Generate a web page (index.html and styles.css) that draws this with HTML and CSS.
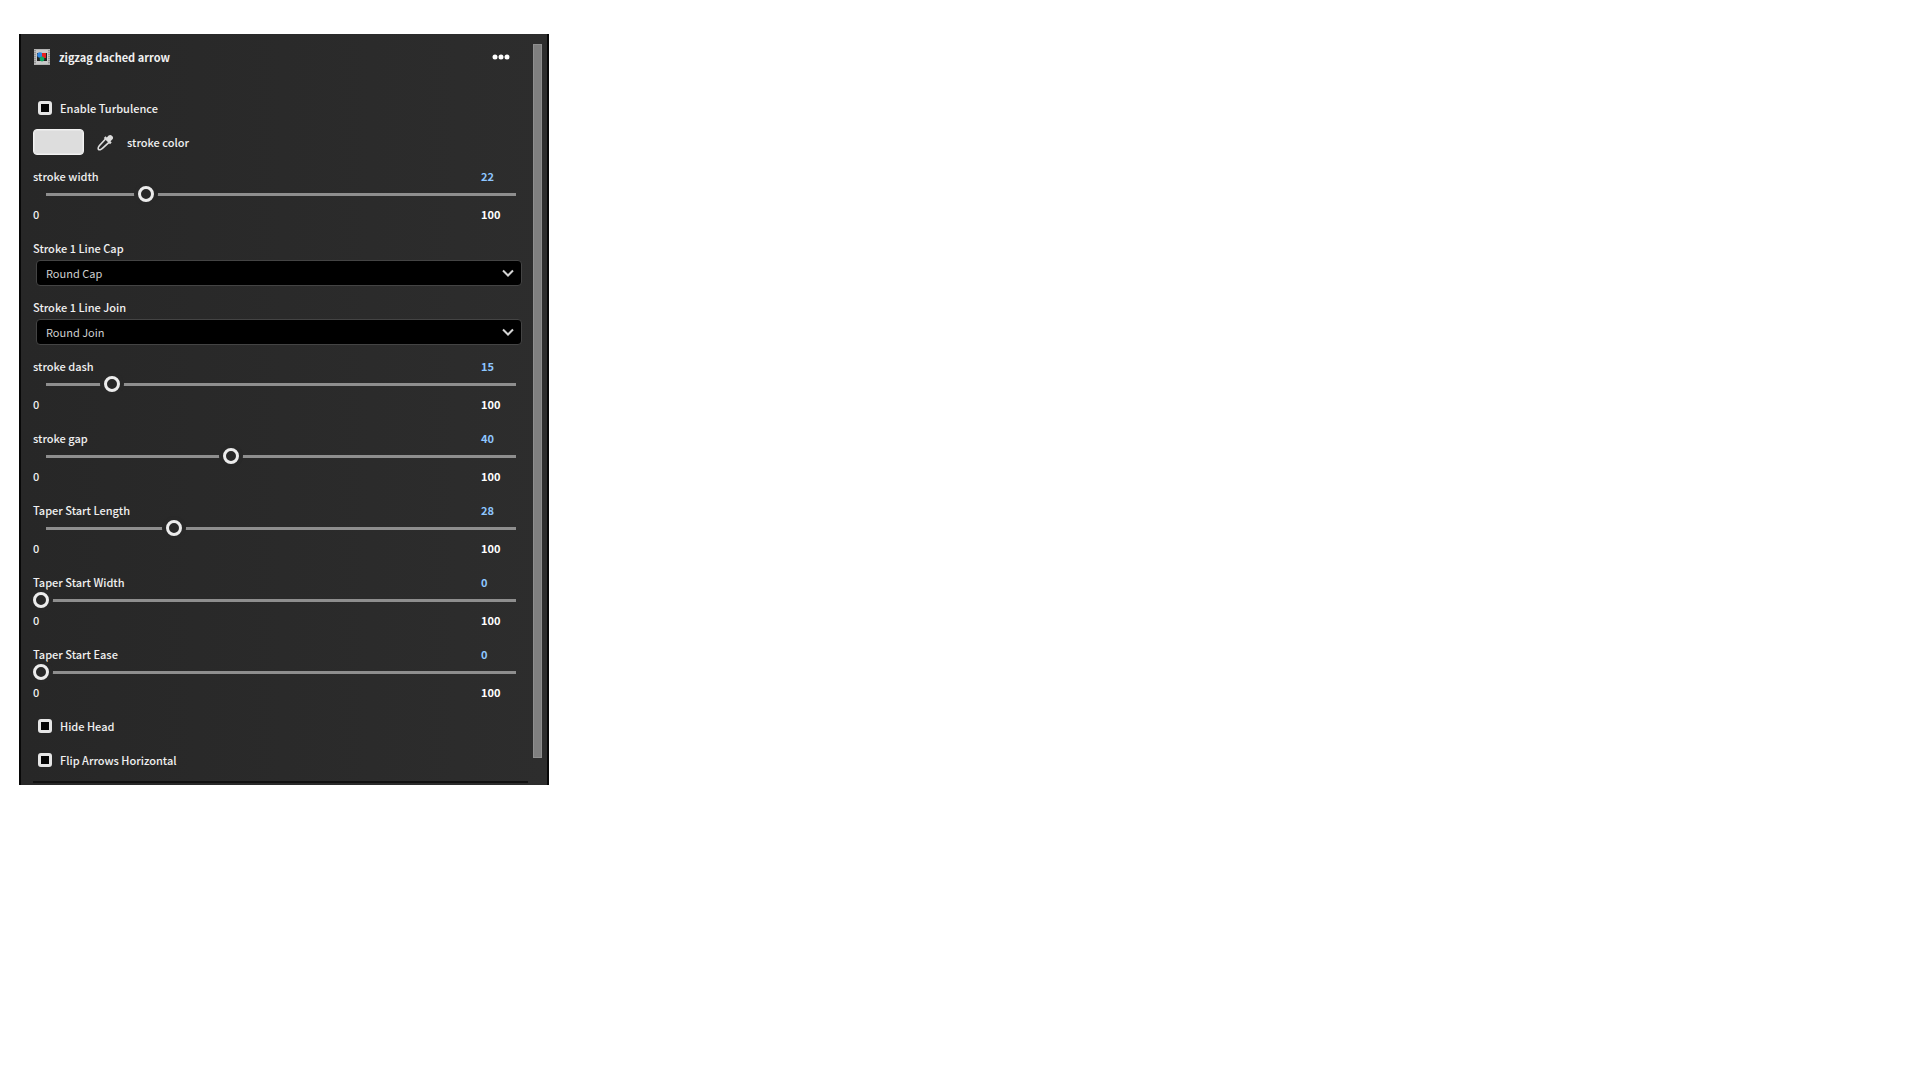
FILE: index.html
```html
<!DOCTYPE html>
<html lang="en">
<head>
    <meta charset="UTF-8">
    <title>zigzag dached arrow</title>
    <link rel="stylesheet" href="styles.css">
</head>
<body>
<form class="panel">
    <div class="panelContent">
        <div class="panelHeader">
            <svg class="clipIcon" viewBox="0 0 16 16" width="16" height="16">
                <rect width="16" height="16" fill="#b4b4b4"/>
                <path d="M1 1v14M15 1v14" stroke="#777" stroke-dasharray="1 1"/>
                <rect x="2" y="1" width="12" height="14" fill="#c8c8c8"/>
                <rect x="3" y="4" width="10" height="8" fill="#222"/>
                <circle cx="6" cy="6" r="2.800" fill="#2f86e0"/>
                <rect x="8" y="4" width="4" height="5" fill="#e82020"/>
                <circle cx="8" cy="10" r="2.400" fill="#10a860"/>
            </svg>
            <h1 class="panelTitle">zigzag dached arrow</h1>
            <button class="menuButton" type="button" aria-label="Menu">
                <svg viewBox="0 0 18 6" width="18" height="6">
                    <circle cx="3" cy="3" r="2.500"/>
                    <circle cx="9" cy="3" r="2.500"/>
                    <circle cx="15" cy="3" r="2.500"/>
                </svg>
            </button>
        </div>

        <div class="checkRow">
            <input class="check" id="turbulence" type="checkbox">
            <label for="turbulence">Enable Turbulence</label>
        </div>

        <div class="colorRow">
            <input class="swatch" id="strokeColor" type="color" value="#dddddd">
            <button class="pickButton" type="button" aria-label="Pick color">
                <svg viewBox="0 0 17 17" width="17" height="17">
                    <path d="M8.500 5L2.500 11.500C1.400 12.700 0.800 14.700 1.500 15.400S4.200 15.500 5.400 14.400L12 8.300" fill="none" stroke="#dcdcdc" stroke-width="1.700"/>
                    <path d="M6.800 4L8.500 2.300l1.300 1.100L11.600 1.600C13.600 -0.600 17.600 3 15.500 5.200L13.500 7.200l1.200 1.400-1.700 1.700z" fill="#dcdcdc"/>
                </svg>
            </button>
            <label for="strokeColor">stroke color</label>
        </div>

        <div class="sliderGroup">
            <div class="line"><label for="strokeWidth">stroke width</label><output class="value" for="strokeWidth">22</output></div>
            <input class="slider" id="strokeWidth" type="range" min="0" max="100" value="22">
            <div class="line"><span>0</span><span class="max">100</span></div>
        </div>

        <div class="selectGroup">
            <label class="line" for="lineCap">Stroke 1 Line Cap</label>
            <div class="selectBox">
                <select class="select" id="lineCap">
                    <option>Round Cap</option>
                    <option>Butt Cap</option>
                </select>
                <svg class="chevron" viewBox="0 0 12 8" width="12" height="8"><path d="M1 1.500L6 6.500l5-5"/></svg>
            </div>
        </div>

        <div class="selectGroup">
            <label class="line" for="lineJoin">Stroke 1 Line Join</label>
            <div class="selectBox">
                <select class="select" id="lineJoin">
                    <option>Round Join</option>
                    <option>Miter Join</option>
                </select>
                <svg class="chevron" viewBox="0 0 12 8" width="12" height="8"><path d="M1 1.500L6 6.500l5-5"/></svg>
            </div>
        </div>

        <div class="sliderGroup">
            <div class="line"><label for="strokeDash">stroke dash</label><output class="value" for="strokeDash">15</output></div>
            <input class="slider" id="strokeDash" type="range" min="0" max="100" value="15">
            <div class="line"><span>0</span><span class="max">100</span></div>
        </div>

        <div class="sliderGroup">
            <div class="line"><label for="strokeGap">stroke gap</label><output class="value" for="strokeGap">40</output></div>
            <input class="slider" id="strokeGap" type="range" min="0" max="100" value="40">
            <div class="line"><span>0</span><span class="max">100</span></div>
        </div>

        <div class="sliderGroup">
            <div class="line"><label for="taperLength">Taper Start Length</label><output class="value" for="taperLength">28</output></div>
            <input class="slider" id="taperLength" type="range" min="0" max="100" value="28">
            <div class="line"><span>0</span><span class="max">100</span></div>
        </div>

        <div class="sliderGroup">
            <div class="line"><label for="taperWidth">Taper Start Width</label><output class="value" for="taperWidth">0</output></div>
            <input class="slider" id="taperWidth" type="range" min="0" max="100" value="0">
            <div class="line"><span>0</span><span class="max">100</span></div>
        </div>

        <div class="sliderGroup">
            <div class="line"><label for="taperEase">Taper Start Ease</label><output class="value" for="taperEase">0</output></div>
            <input class="slider" id="taperEase" type="range" min="0" max="100" value="0">
            <div class="line"><span>0</span><span class="max">100</span></div>
        </div>

        <div class="checkRow">
            <input class="check" id="hideHead" type="checkbox">
            <label for="hideHead">Hide Head</label>
        </div>
        <div class="checkRow">
            <input class="check" id="flipArrows" type="checkbox">
            <label for="flipArrows">Flip Arrows Horizontal</label>
        </div>
        <hr class="divider">
    </div>
    <div class="scrollThumb"></div>
</form>
<script>
    var sliders = document.querySelectorAll('.slider');
    for (var i = 0; i < sliders.length; i++) {
        sliders[i].oninput = function () {
            document.querySelector('output[for="' + this.id + '"]').value = this.value;
        };
    }
</script>
</body>
</html>
```
FILE: styles.css
```css
* {
    box-sizing: border-box;
}
body {
    margin: 0;
    background-color: #fff;
    font-family: "Noto Sans CJK SC", "Noto Sans", sans-serif;
    font-size: 11px;
    font-weight: 500;
    line-height: 20px;
    color: #f0f0f0;
}
button {
    display: flex;
    margin: 0;
    padding: 0;
    border: 0;
    background: none;
}
.panel {
    display: flex;
    gap: 5px;
    max-width: 530px;
    margin: 34px 19px;
    padding: 0 5px 2px 12px;
    border: solid #070707;
    border-width: 0 2px;
    background: linear-gradient(90deg, #272727, #2d2d2d);
}
.panelContent {
    flex: 1;
}
.panelHeader {
    display: flex;
    align-items: center;
    height: 57px;
    padding: 0 18px 11px 1px;
}
.panelTitle {
    flex: 1;
    margin: 0 0 0 9px;
    font-size: 11px;
    font-weight: 700;
}
.menuButton {
    fill: #fff;
}
.checkRow,
.colorRow {
    display: flex;
    align-items: center;
    height: 34px;
}
.checkRow {
    gap: 8px;
    padding-left: 5px;
}
.check {
    appearance: none;
    width: 14px;
    height: 14px;
    margin: 0;
    border: 3px solid #e6e6e6;
    border-radius: 3px;
    background-color: #050505;
}
.check:checked {
    background-color: #4b9cf5;
}
.swatch {
    appearance: none;
    width: 51px;
    height: 26px;
    margin: 0;
    padding: 0;
    border: 1px solid #f2f2f2;
    border-radius: 4px;
    background-color: #dddddd;
}
.swatch::-webkit-color-swatch-wrapper {
    padding: 0;
}
.swatch::-webkit-color-swatch {
    border: 1px solid #e6e6e6;
    border-radius: 3px;
}
.pickButton {
    margin: 0 13px;
}
.line {
    display: flex;
    justify-content: space-between;
}
.value,
.max {
    width: 47px;
    font-weight: 700;
}
.value {
    color: #8ec6ff;
}
.max {
    color: #fff;
}

/* sliders */
.sliderGroup {
    padding: 7px 0;
}
.slider {
    appearance: none;
    display: block;
    width: calc(100% - 3px);
    height: 16px;
    margin: 0 0 2px;
    background: none;
}
.slider::-webkit-slider-runnable-track {
    height: 16px;
    background: linear-gradient(#8e8e8e, #8e8e8e) 13px 7px / calc(100% - 22px) 3px no-repeat;
}
.slider::-webkit-slider-thumb {
    appearance: none;
    width: 16px;
    height: 16px;
    border: 3px solid #ececec;
    border-radius: 50%;
    background-color: #282828;
    box-shadow: 0 0 0 4px #282828;
}

/* drop-downs */
.selectGroup {
    padding: 7px 6px 4px 0;
}
.selectBox {
    position: relative;
    margin: 2px 0 0 3px;
}
.select {
    appearance: none;
    display: block;
    width: 100%;
    height: 26px;
    padding: 0 9px;
    border: 1px solid #444;
    border-radius: 4px;
    background-color: #000;
    color: #d0d0d0;
    font-family: inherit;
    font-size: 11px;
    font-weight: 400;
}
.chevron {
    position: absolute;
    top: 9px;
    right: 8px;
    fill: none;
    stroke: #d4d4d4;
    stroke-width: 2;
    pointer-events: none;
}

.divider {
    height: 2px;
    margin: 4px 0 0;
    border: 0;
    background-color: #111;
}
.scrollThumb {
    width: 9px;
    margin: 10px 0 25px;
    border: 1px solid #8f8f8f;
    background-color: #7f7f7f;
}
```
